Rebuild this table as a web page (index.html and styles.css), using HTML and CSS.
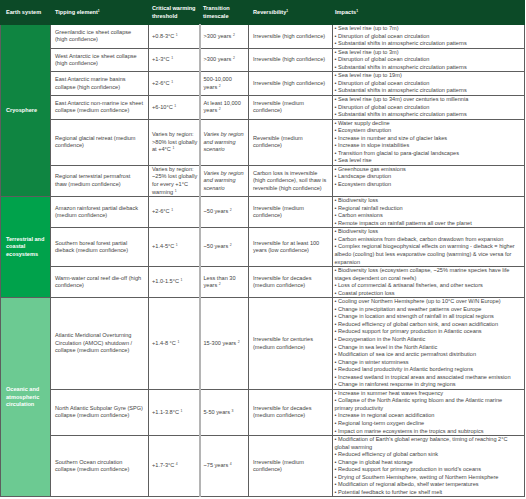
FILE: index.html
```html
<!DOCTYPE html>
<html lang="en">
<head>
<meta charset="utf-8">
<title>Tipping elements</title>
<link rel="stylesheet" href="styles.css">
</head>
<body>
<table class="tp">
<colgroup>
<col class="c1"><col class="c2"><col class="c3"><col class="c4"><col class="c5"><col class="c6">
</colgroup>
<thead>
<tr>
<th>Earth system</th>
<th class="tip">Tipping element<span class="s">1</span></th>
<th>Critical warming<br>threshold</th>
<th>Transition<br>timescale</th>
<th class="rev">Reversibility<span class="s">1</span></th>
<th class="imp">Impacts<span class="s">1</span></th>
</tr>
</thead>
<tbody>
<tr>
<td class="sys cryo" rowspan="6">Cryosphere</td>
<td class="tip">Greenlandic ice sheet collapse<br>(high confidence)</td>
<td>+0.8-3°C <span class="s">1</span></td>
<td class="ts">&gt;300 years <span class="s">2</span></td>
<td class="rev">Irreversible (high confidence)</td>
<td class="imp">• Sea level rise (up to 7m)<br>• Disruption of global ocean circulation<br>• Substantial shifts in atmospheric circulation patterns</td>
</tr>
<tr>
<td class="tip">West Antarctic ice sheet collapse<br>(high confidence)</td>
<td>+1-3°C <span class="s">1</span></td>
<td class="ts">&gt;300 years <span class="s">2</span></td>
<td class="rev">Irreversible (high confidence)</td>
<td class="imp">• Sea level rise (up to 3m)<br>• Disruption of global ocean circulation<br>• Substantial shifts in atmospheric circulation patterns</td>
</tr>
<tr>
<td class="tip">East Antarctic marine basins<br>collapse (high confidence)</td>
<td>+2-6°C <span class="s">1</span></td>
<td class="ts">500-10,000<br>years <span class="s">2</span></td>
<td class="rev">Irreversible (high confidence)</td>
<td class="imp">• Sea level rise (up to 19m)<br>• Disruption of global ocean circulation<br>• Substantial shifts in atmospheric circulation patterns</td>
</tr>
<tr>
<td class="tip">East Antarctic non-marine ice sheet<br>collapse (medium confidence)</td>
<td>+6-10°C <span class="s">1</span></td>
<td class="ts">At least 10,000<br>years <span class="s">2</span></td>
<td class="rev">Irreversible (medium<br>confidence)</td>
<td class="imp">• Sea level rise (up to 34m) over centuries to millennia<br>• Disruption of global ocean circulation<br>• Substantial shifts in atmospheric circulation patterns</td>
</tr>
<tr>
<td class="tip">Regional glacial retreat (medium<br>confidence)</td>
<td>Varies by region:<br>&gt;80% lost globally<br>at +4°C <span class="s">1</span></td>
<td class="ts it">Varies by region<br>and warming<br>scenario</td>
<td class="rev">Reversible (medium<br>confidence)</td>
<td class="imp">• Water supply decline<br>• Ecosystem disruption<br>• Increase in number and size of glacier lakes<br>• Increase in slope instabilities<br>• Transition from glacial to para-glacial landscapes<br>• Sea level rise</td>
</tr>
<tr>
<td class="tip">Regional terrestrial permafrost<br>thaw (medium confidence)</td>
<td>Varies by region:<br>~25% lost globally<br>for every +1°C<br>warming <span class="s">1</span></td>
<td class="ts it">Varies by region<br>and warming<br>scenario</td>
<td class="rev">Carbon loss is irreversible<br>(high confidence), soil thaw is<br>reversible (high confidence)</td>
<td class="imp">• Greenhouse gas emissions<br>• Landscape disruption<br>• Ecosystem disruption</td>
</tr>
<tr>
<td class="sys terr" rowspan="3">Terrestrial and<br>coastal<br>ecosystems</td>
<td class="tip">Amazon rainforest partial dieback<br>(medium confidence)</td>
<td>+2-6°C <span class="s">1</span></td>
<td class="ts">~50 years <span class="s">2</span></td>
<td class="rev">Irreversible (medium<br>confidence)</td>
<td class="imp">• Biodiversity loss<br>• Regional rainfall reduction<br>• Carbon emissions<br>• Remote impacts on rainfall patterns all over the planet</td>
</tr>
<tr>
<td class="tip">Southern boreal forest partial<br>dieback (medium confidence)</td>
<td>+1.4-5°C <span class="s">1</span></td>
<td class="ts">~50 years <span class="s">2</span></td>
<td class="rev">Irreversible for at least 100<br>years (low confidence)</td>
<td class="imp">• Biodiversity loss<br>• Carbon emissions from dieback, carbon drawdown from expansion<br>• Complex regional biogeophysical effects on warming - dieback = higher<br>albedo (cooling) but less evaporative cooling (warming) &amp; vice versa for<br>expansion</td>
</tr>
<tr>
<td class="tip">Warm-water coral reef die-off (high<br>confidence)</td>
<td>+1.0-1.5°C <span class="s">1</span></td>
<td class="ts">Less than 30<br>years <span class="s">2</span></td>
<td class="rev">Irreversible for decades<br>(medium confidence)</td>
<td class="imp">• Biodiversity loss (ecosystem collapse, ~25% marine species have life<br>stages dependent on coral reefs)<br>• Loss of commercial &amp; artisanal fisheries, and other sectors<br>• Coastal protection loss</td>
</tr>
<tr>
<td class="sys ocean" rowspan="3">Oceanic and<br>atmospheric<br>circulation</td>
<td class="tip">Atlantic Meridional Overturning<br>Circulation (AMOC) shutdown /<br>collapse (medium confidence)</td>
<td>+1.4-8 °C <span class="s">1</span></td>
<td class="ts">15-300 years <span class="s">2</span></td>
<td class="rev">Irreversible for centuries<br>(medium confidence)</td>
<td class="imp">• Cooling over Northern Hemisphere (up to 10°C over W/N Europe)<br>• Change in precipitation and weather patterns over Europe<br>• Change in location and strength of rainfall in all tropical regions<br>• Reduced efficiency of global carbon sink, and ocean acidification<br>• Reduced support for primary production in Atlantic oceans<br>• Deoxygenation in the North Atlantic<br>• Change in sea level in the North Atlantic<br>• Modification of sea ice and arctic permafrost distribution<br>• Change in winter storminess<br>• Reduced land productivity in Atlantic bordering regions<br>• Increased wetland in tropical areas and associated methane emission<br>• Change in rainforest response in drying regions</td>
</tr>
<tr>
<td class="tip">North Atlantic Subpolar Gyre (SPG)<br>collapse (medium confidence)</td>
<td>+1.1-3.8°C <span class="s">1</span></td>
<td class="ts">5-50 years <span class="s">3</span></td>
<td class="rev">Irreversible for decades<br>(medium confidence)</td>
<td class="imp">• Increase in summer heat waves frequency<br>• Collapse of the North Atlantic spring bloom and the Atlantic marine<br>primary productivity<br>• Increase in regional ocean acidification<br>• Regional long-term oxygen decline<br>• Impact on marine ecosystems in the tropics and subtropics</td>
</tr>
<tr>
<td class="tip">Southern Ocean circulation<br>collapse (medium confidence)</td>
<td>+1.7-3°C <span class="s">4</span></td>
<td class="ts">~75 years <span class="s">4</span></td>
<td class="rev">Irreversible (medium<br>confidence)</td>
<td class="imp">• Modification of Earth’s global energy balance, timing of reaching 2°C<br>global warming<br>• Reduced efficiency of global carbon sink<br>• Change in global heat storage<br>• Reduced support for primary production in world’s oceans<br>• Drying of Southern Hemisphere, wetting of Northern Hemisphere<br>• Modification of regional albedo, shelf water temperatures<br>• Potential feedback to further ice shelf melt</td>
</tr>
</tbody>
</table>
</body>
</html>
```

FILE: styles.css
```css
html, body {
  margin: 0;
  padding: 0;
  background: #ffffff;
}

body {
  font-family: "Liberation Sans", Arial, sans-serif;
}

.tp {
  border-collapse: collapse;
  table-layout: fixed;
  width: 524px;
  font-size: 5.6px;
  line-height: 7.55px;
  color: #444444;
}

.c1 { width: 50px; }
.c2 { width: 98px; }
.c3 { width: 51px; }
.c4 { width: 49px; }
.c5 { width: 84px; }
.c6 { width: 192px; }

.tp td,
.tp th {
  border: 1px solid #5e5e5e;
  padding: 0 3px;
  vertical-align: middle;
  text-align: left;
  white-space: nowrap;
  overflow: hidden;
}

.tp th {
  background: #0c4a27;
  color: #ffffff;
  font-weight: bold;
  padding: 4px 3px;
  border-color: #0c4a27;
  border-left: 1px solid #4d7a5f;
}

.tp th:first-child {
  border-left-color: #0c4a27;
  padding-left: 5px;
}

.tp .tip { padding-left: 4px; }
.tp .rev { padding-left: 4px; }
.tp .imp { padding: 0 1.5px; vertical-align: top; }
.tp th.imp { vertical-align: middle; padding: 4px 2px; }

.tp td.ts { border-left: 2px solid #b4b4b4; }

.it { font-style: italic; }

.tp td.sys {
  color: #ffffff;
  font-weight: bold;
  padding-left: 5px;
}

.cryo { background: #0f8541; }
.terr { background: #00a24b; }
.ocean { background: #6cca92; }

.s {
  font-size: 3.4px;
  line-height: 0;
  vertical-align: 2px;
}
```
